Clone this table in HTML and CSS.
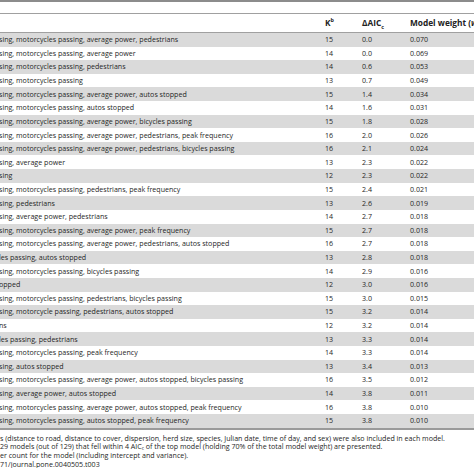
FILE: index.html
```html
<!DOCTYPE html>
<html>
<head>
<meta charset="utf-8">
<link rel="stylesheet" href="styles.css">
</head>
<body>
<div class="page">
  <div class="top-rule"></div>
  <div class="caption-gap"></div>
  <div class="table">
    <div class="row head">
      <div class="c desc"></div>
      <div class="c">K<sup>b</sup></div>
      <div class="c">ΔAIC<sub>c</sub></div>
      <div class="c">Model weight (<i>w</i><sub>i</sub>)</div>
    </div>
    <div class="row g"><div class="c desc">sing, motorcycles passing, average power, pedestrians</div><div class="c">15</div><div class="c">0.0</div><div class="c">0.070</div></div>
    <div class="row"><div class="c desc">sing, motorcycles passing, average power</div><div class="c">14</div><div class="c">0.0</div><div class="c">0.069</div></div>
    <div class="row g"><div class="c desc">sing, motorcycles passing, pedestrians</div><div class="c">14</div><div class="c">0.6</div><div class="c">0.053</div></div>
    <div class="row"><div class="c desc">sing, motorcycles passing</div><div class="c">13</div><div class="c">0.7</div><div class="c">0.049</div></div>
    <div class="row g"><div class="c desc">sing, motorcycles passing, average power, autos stopped</div><div class="c">15</div><div class="c">1.4</div><div class="c">0.034</div></div>
    <div class="row"><div class="c desc">sing, motorcycles passing, autos stopped</div><div class="c">14</div><div class="c">1.6</div><div class="c">0.031</div></div>
    <div class="row g"><div class="c desc">sing, motorcycles passing, average power, bicycles passing</div><div class="c">15</div><div class="c">1.8</div><div class="c">0.028</div></div>
    <div class="row"><div class="c desc">sing, motorcycles passing, average power, pedestrians, peak frequency</div><div class="c">16</div><div class="c">2.0</div><div class="c">0.026</div></div>
    <div class="row g"><div class="c desc">sing, motorcycles passing, average power, pedestrians, bicycles passing</div><div class="c">16</div><div class="c">2.1</div><div class="c">0.024</div></div>
    <div class="row"><div class="c desc">sing, average power</div><div class="c">13</div><div class="c">2.3</div><div class="c">0.022</div></div>
    <div class="row g"><div class="c desc">sing</div><div class="c">12</div><div class="c">2.3</div><div class="c">0.022</div></div>
    <div class="row"><div class="c desc">sing, motorcycles passing, pedestrians, peak frequency</div><div class="c">15</div><div class="c">2.4</div><div class="c">0.021</div></div>
    <div class="row g"><div class="c desc">sing, pedestrians</div><div class="c">13</div><div class="c">2.6</div><div class="c">0.019</div></div>
    <div class="row"><div class="c desc">sing, average power, pedestrians</div><div class="c">14</div><div class="c">2.7</div><div class="c">0.018</div></div>
    <div class="row g"><div class="c desc">sing, motorcycles passing, average power, peak frequency</div><div class="c">15</div><div class="c">2.7</div><div class="c">0.018</div></div>
    <div class="row"><div class="c desc">sing, motorcycles passing, average power, pedestrians, autos stopped</div><div class="c">16</div><div class="c">2.7</div><div class="c">0.018</div></div>
    <div class="row g"><div class="c desc">les passing, autos stopped</div><div class="c">13</div><div class="c">2.8</div><div class="c">0.018</div></div>
    <div class="row"><div class="c desc">sing, motorcycles passing, bicycles passing</div><div class="c">14</div><div class="c">2.9</div><div class="c">0.016</div></div>
    <div class="row g"><div class="c desc">opped</div><div class="c">12</div><div class="c">3.0</div><div class="c">0.016</div></div>
    <div class="row"><div class="c desc">sing, motorcycles passing, pedestrians, bicycles passing</div><div class="c">15</div><div class="c">3.0</div><div class="c">0.015</div></div>
    <div class="row g"><div class="c desc">sing, motorcycle passing, pedestrians, autos stopped</div><div class="c">15</div><div class="c">3.2</div><div class="c">0.014</div></div>
    <div class="row"><div class="c desc">ns</div><div class="c">12</div><div class="c">3.2</div><div class="c">0.014</div></div>
    <div class="row g"><div class="c desc">les passing, pedestrians</div><div class="c">13</div><div class="c">3.3</div><div class="c">0.014</div></div>
    <div class="row"><div class="c desc">sing, motorcycles passing, peak frequency</div><div class="c">14</div><div class="c">3.3</div><div class="c">0.014</div></div>
    <div class="row g"><div class="c desc">sing, autos stopped</div><div class="c">13</div><div class="c">3.4</div><div class="c">0.013</div></div>
    <div class="row"><div class="c desc">sing, motorcycles passing, average power, autos stopped, bicycles passing</div><div class="c">16</div><div class="c">3.5</div><div class="c">0.012</div></div>
    <div class="row g"><div class="c desc">sing, average power, autos stopped</div><div class="c">14</div><div class="c">3.8</div><div class="c">0.011</div></div>
    <div class="row"><div class="c desc">sing, motorcycles passing, average power, autos stopped, peak frequency</div><div class="c">16</div><div class="c">3.8</div><div class="c">0.010</div></div>
    <div class="row g"><div class="c desc">sing, motorcycles passing, autos stopped, peak frequency</div><div class="c">15</div><div class="c">3.8</div><div class="c">0.010</div></div>
  </div>
  <div class="notes">
    <p>s (distance to road, distance to cover, dispersion, herd size, species, Julian date, time of day, and sex) were also included in each model.</p>
    <p>29 models (out of 129) that fell within 4 AIC<span class="nsub">c</span> of the top model (holding 70% of the total model weight) are presented.</p>
    <p>er count for the model (including intercept and variance).</p>
    <p>71/journal.pone.0040505.t003</p>
  </div>
</div>
</body>
</html>
```

FILE: styles.css
```css
html, body {
  margin: 0;
  padding: 0;
  background: #fff;
  overflow: hidden;
}
.page {
  width: 520px;
  font-family: "Open Sans", "Noto Sans", sans-serif;
  font-size: 7.1px;
  color: #262626;
}
.top-rule {
  height: 2px;
  background: #8c8c8c;
}
.caption-gap {
  height: 11px;
  border-bottom: 1px solid #a0a0a0;
}
.table {
  border-bottom: 2px solid #9a9a9a;
}
.row {
  display: grid;
  grid-template-columns: 325px 37px 48px 110px;
  height: 13.62px;
  align-items: center;
}
.row.g {
  background: #dadada;
}
.row.head {
  height: 18px;
  border-bottom: 1px solid #a0a0a0;
  font-weight: 700;
  font-size: 8.3px;
  color: #222;
}
.c {
  white-space: nowrap;
  line-height: 1;
}
.desc {
  margin-left: -1px;
}
sup, sub {
  font-size: 65%;
  line-height: 0;
}
.notes {
  padding-top: 4px;
  font-size: 7.1px;
  line-height: 8.7px;
}
.notes p {
  margin: 0;
}
.nsub {
  font-size: 4.6px;
  vertical-align: -1px;
  line-height: 0;
}
```
